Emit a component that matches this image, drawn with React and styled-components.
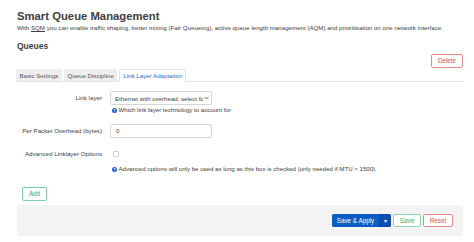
import React from "react";
import styled, { createGlobalStyle } from "styled-components";

const Global = createGlobalStyle`
  html, body { margin: 0; padding: 0; background: #fff; }
  body { font-family: "Liberation Sans", Arial, sans-serif; color: #404040; }
  * { box-sizing: border-box; }
`;

const Page = styled.div`
  width: 474px;
  height: 242px;
  padding: 9px 11px 0 16px;
  overflow: hidden;
`;

const Title = styled.h2`
  margin: 0 0 0 1px;
  font-size: 11.3px;
  line-height: 14px;
  font-weight: bold;
  color: #404040;
`;

const Desc = styled.div`
  margin: 1px 0 0 1px;
  font-size: 6.15px;
  line-height: 8px;
  white-space: nowrap;
  abbr { text-decoration: underline; text-decoration-thickness: 0.5px; }
`;

const Section = styled.h3`
  margin: 9px 0 0 1px;
  font-size: 8.5px;
  line-height: 10px;
  font-weight: bold;
`;

const RightRow = styled.div`
  display: flex;
  justify-content: flex-end;
  margin-top: 3px;
`;

const Btn = styled.button`
  font-family: inherit;
  font-size: 6.3px;
  height: ${(p) => p.$h || 14}px;
  padding: 0 ${(p) => (p.$px ?? 4)}px;
  border-radius: 2px;
  background: ${(p) => p.$bg || "#fff"};
  color: ${(p) => p.$color};
  border: 1px solid ${(p) => p.$border};
  line-height: 1;
  white-space: nowrap;
  cursor: pointer;
  width: ${(p) => (p.$w ? p.$w + "px" : "auto")};
`;

const Tabs = styled.div`
  display: flex;
  gap: 2px;
  margin-top: 1px;
  border-bottom: 1px solid #e2e2e2;
  height: 13px;
`;

const Tab = styled.div`
  height: 13px;
  padding: 0 ${(p) => (p.$active ? 3 : 2.5)}px;
  font-size: 6.15px;
  line-height: 12px;
  color: ${(p) => (p.$active ? "#2a6bc9" : "#555")};
  background: ${(p) => (p.$active ? "#fff" : "#eeeeee")};
  border: 1px solid ${(p) => (p.$active ? "#e2e2e2" : "#eeeeee")};
  border-bottom-color: ${(p) => (p.$active ? "#fff" : "#e2e2e2")};
  border-radius: 2px 2px 0 0;
  white-space: nowrap;
`;

const Form = styled.div`
  padding-top: 9px;
`;

const Row = styled.div`
  display: grid;
  grid-template-columns: 86px 1fr;
  column-gap: 8px;
  margin-top: ${(p) => p.$mt || 0}px;
`;

const Label = styled.div`
  text-align: right;
  font-size: 6.2px;
  line-height: ${(p) => p.$lh || 14}px;
  white-space: nowrap;
`;

const Field = styled.div`
  display: flex;
  flex-direction: column;
`;

const Select = styled.div`
  width: 102px;
  height: 14px;
  border: 1px solid #d6d6d6;
  border-radius: 2px;
  display: flex;
  align-items: center;
  padding: 0 2px 0 4px;
  font-size: 6.1px;
  overflow: hidden;
  span { flex: 1; white-space: nowrap; overflow: hidden; }
  svg { flex: none; margin-left: 1px; }
`;

const Input = styled.div`
  width: 102px;
  height: 14px;
  border: 1px solid #d6d6d6;
  border-radius: 2px;
  padding: 0 5px;
  font-size: 6.1px;
  line-height: 12px;
`;

const Check = styled.div`
  width: 6px;
  height: 6px;
  border: 1px solid #cfcfcf;
  border-radius: 1px;
  margin: 1px 0 0 3px;
`;

const Help = styled.div`
  display: flex;
  align-items: center;
  gap: 1.5px;
  font-size: 6.1px;
  line-height: 8px;
  margin-top: ${(p) => p.$mt || 1}px;
  padding-left: 2px;
  white-space: nowrap;
`;

const InfoDot = styled.span`
  width: 5px;
  height: 5px;
  border-radius: 50%;
  background: #1f5fbf;
  color: #fff;
  font-size: 4px;
  line-height: 5px;
  text-align: center;
  font-weight: bold;
  flex: none;
`;

const AddWrap = styled.div`
  margin: 9px 0 0 6px;
`;

const Footer = styled.div`
  margin-top: 4px;
  height: 31px;
  background: #f3f3f3;
  display: flex;
  justify-content: flex-end;
  align-items: flex-start;
  padding: 9px 10px 0 0;
  gap: 2px;
  margin-left: 1px;
`;

const Split = styled.div`
  display: flex;
  gap: 1px;
  background: #0a4aa8;
  border-radius: 2px;
`;

export default function App() {
  return (
    <Page>
      <Global />
      <Title>Smart Queue Management</Title>
      <Desc>
        With <abbr>SQM</abbr> you can enable traffic shaping, better mixing (Fair Queueing), active queue length management (AQM) and prioritisation on one network interface.
      </Desc>
      <Section>Queues</Section>
      <RightRow>
        <Btn $color="#d9534f" $border="#e88a88" $w={32}>Delete</Btn>
      </RightRow>
      <Tabs>
        <Tab>Basic Settings</Tab>
        <Tab>Queue Discipline</Tab>
        <Tab $active>Link Layer Adaptation</Tab>
      </Tabs>
      <Form>
        <Row>
          <Label>Link layer</Label>
          <Field>
            <Select>
              <span>Ethernet with overhead: select for e.g. VDSL2.</span>
              <svg width="5" height="4" viewBox="0 0 10 8">
                <path d="M1 2l4 4 4-4" fill="none" stroke="#444" strokeWidth="1.6" />
              </svg>
            </Select>
            <Help>
              <InfoDot>?</InfoDot>
              Which link layer technology to account for
            </Help>
          </Field>
        </Row>
        <Row $mt={10}>
          <Label>Per Packet Overhead (bytes)</Label>
          <Field>
            <Input>0</Input>
          </Field>
        </Row>
        <Row $mt={12}>
          <Label $lh={8}>Advanced Linklayer Options</Label>
          <Field>
            <Check />
            <Help $mt={8}>
              <InfoDot>?</InfoDot>
              Advanced options will only be used as long as this box is checked (only needed if MTU &gt; 1500).
            </Help>
          </Field>
        </Row>
      </Form>
      <AddWrap>
        <Btn $color="#3aa870" $border="#7fcfa6" $w={25}>Add</Btn>
      </AddWrap>
      <Footer>
        <Split>
          <Btn $bg="#0b5cc4" $color="#fff" $border="#0b5cc4" $h={13} $w={47} $px={0}>Save &amp; Apply</Btn>
          <Btn $bg="#0b4fae" $color="#fff" $border="#0b4fae" $h={13} $w={11} $px={0}>▾</Btn>
        </Split>
        <Btn $color="#3aa870" $border="#8fd4b0" $h={13} $w={28}>Save</Btn>
        <Btn $color="#d9534f" $border="#e88a88" $h={13} $w={30}>Reset</Btn>
      </Footer>
    </Page>
  );
}
